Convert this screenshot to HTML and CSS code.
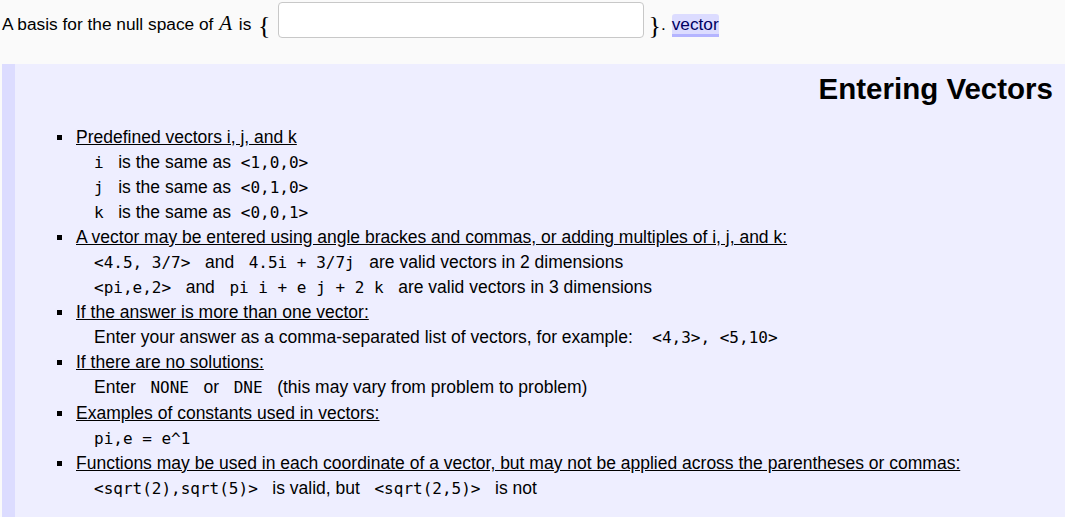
FILE: index.html
```html
<!DOCTYPE html>
<html lang="en">
<head>
  <meta charset="UTF-8">
  <title>Entering Vectors</title>
  <link rel="stylesheet" href="styles.css">
</head>
<body>

<div class="question">
  A basis for the null space of <span class="math-var">A</span> is <span class="brace">{</span><input type="text" class="answer"><span class="brace brace-close">}</span>. <span class="answer-tag">vector</span>
</div>

<div class="help">
  <h2 class="help-title">Entering Vectors</h2>
  <ul class="help-list">
    <li>
      <span class="item-head">Predefined vectors i, j, and k</span>
      <div class="item-line"><code>i</code>&nbsp;&nbsp; is the same as&nbsp; <code>&lt;1,0,0&gt;</code></div>
      <div class="item-line"><code>j</code>&nbsp;&nbsp; is the same as&nbsp; <code>&lt;0,1,0&gt;</code></div>
      <div class="item-line"><code>k</code>&nbsp;&nbsp; is the same as&nbsp; <code>&lt;0,0,1&gt;</code></div>
    </li>
    <li>
      <span class="item-head">A vector may be entered using angle brackes and commas, or adding multiples of i, j, and k:</span>
      <div class="item-line"><code>&lt;4.5, 3/7&gt;</code>&nbsp;&nbsp; and&nbsp;&nbsp; <code>4.5i + 3/7j</code>&nbsp;&nbsp; are valid vectors in 2 dimensions</div>
      <div class="item-line"><code>&lt;pi,e,2&gt;</code>&nbsp;&nbsp; and&nbsp;&nbsp; <code>pi i + e j + 2 k</code>&nbsp;&nbsp; are valid vectors in 3 dimensions</div>
    </li>
    <li>
      <span class="item-head">If the answer is more than one vector:</span>
      <div class="item-line">Enter your answer as a comma-separated list of vectors, for example:&nbsp;&nbsp;&nbsp; <code>&lt;4,3&gt;, &lt;5,10&gt;</code></div>
    </li>
    <li>
      <span class="item-head">If there are no solutions:</span>
      <div class="item-line">Enter&nbsp;&nbsp; <code>NONE</code>&nbsp;&nbsp; or&nbsp;&nbsp; <code>DNE</code>&nbsp;&nbsp; (this may vary from problem to problem)</div>
    </li>
    <li>
      <span class="item-head">Examples of constants used in vectors:</span>
      <div class="item-line"><code>pi,e = e^1</code></div>
    </li>
    <li>
      <span class="item-head">Functions may be used in each coordinate of a vector, but may not be applied across the parentheses or commas:</span>
      <div class="item-line"><code>&lt;sqrt(2),sqrt(5)&gt;</code>&nbsp;&nbsp; is valid, but&nbsp;&nbsp; <code>&lt;sqrt(2,5)&gt;</code>&nbsp;&nbsp; is not</div>
    </li>
  </ul>
</div>

</body>
</html>
```

FILE: styles.css
```css
body {
  font-family: "Liberation Sans", Arial, sans-serif;
  font-size: 17.3px;
  color: #000;
  background: #fafafa;
  margin: 0;
}
.question {
  padding: 2px 2px 0;
  height: 38px;
}
.math-var {
  font-family: "Liberation Serif", "Times New Roman", serif;
  font-style: italic;
  font-size: 21px;
  margin: 0 2px 0 1px;
}
.brace {
  font-family: "Liberation Serif", "Times New Roman", serif;
  font-size: 26px;
  vertical-align: -4px;
  margin: 0 7px 0 2px;
}
.brace-close {
  margin: 0 0 0 5px;
}
.answer {
  box-sizing: border-box;
  width: 366px;
  height: 36px;
  padding: 0 6px;
  font-size: 16px;
  border: 1px solid #c8c8c8;
  border-radius: 4px;
  background: #fff;
  vertical-align: 5px;
}
.answer-tag {
  color: #000060;
  background: #dcdcff;
  border-bottom: 3px solid #b4b4ff;
  border-radius: 3px 3px 0 0;
  margin-left: 1px;
}
.help {
  margin: 24px 0 0 2px;
  border-left: 13px solid #dcdcff;
  background: #eeeeff;
  padding: 8px 12px 40px 0;
}
.help-title {
  margin: 0;
  text-align: right;
  font-size: 29.5px;
  font-weight: bold;
  line-height: normal;
}
.help-list {
  margin: 18.5px 0 0;
  padding-left: 61px;
  list-style: none;
  font-size: 17.5px;
  line-height: 25.1px;
}
.help-list li {
  position: relative;
}
.help-list li::before {
  content: "";
  position: absolute;
  left: -19px;
  top: 10px;
  width: 5px;
  height: 5px;
  background: #000;
}
.item-head {
  text-decoration: underline;
}
.item-line {
  margin-left: 18px;
}
code {
  font-family: "DejaVu Sans Mono", "Liberation Mono", monospace;
  font-size: 16px;
}
```
